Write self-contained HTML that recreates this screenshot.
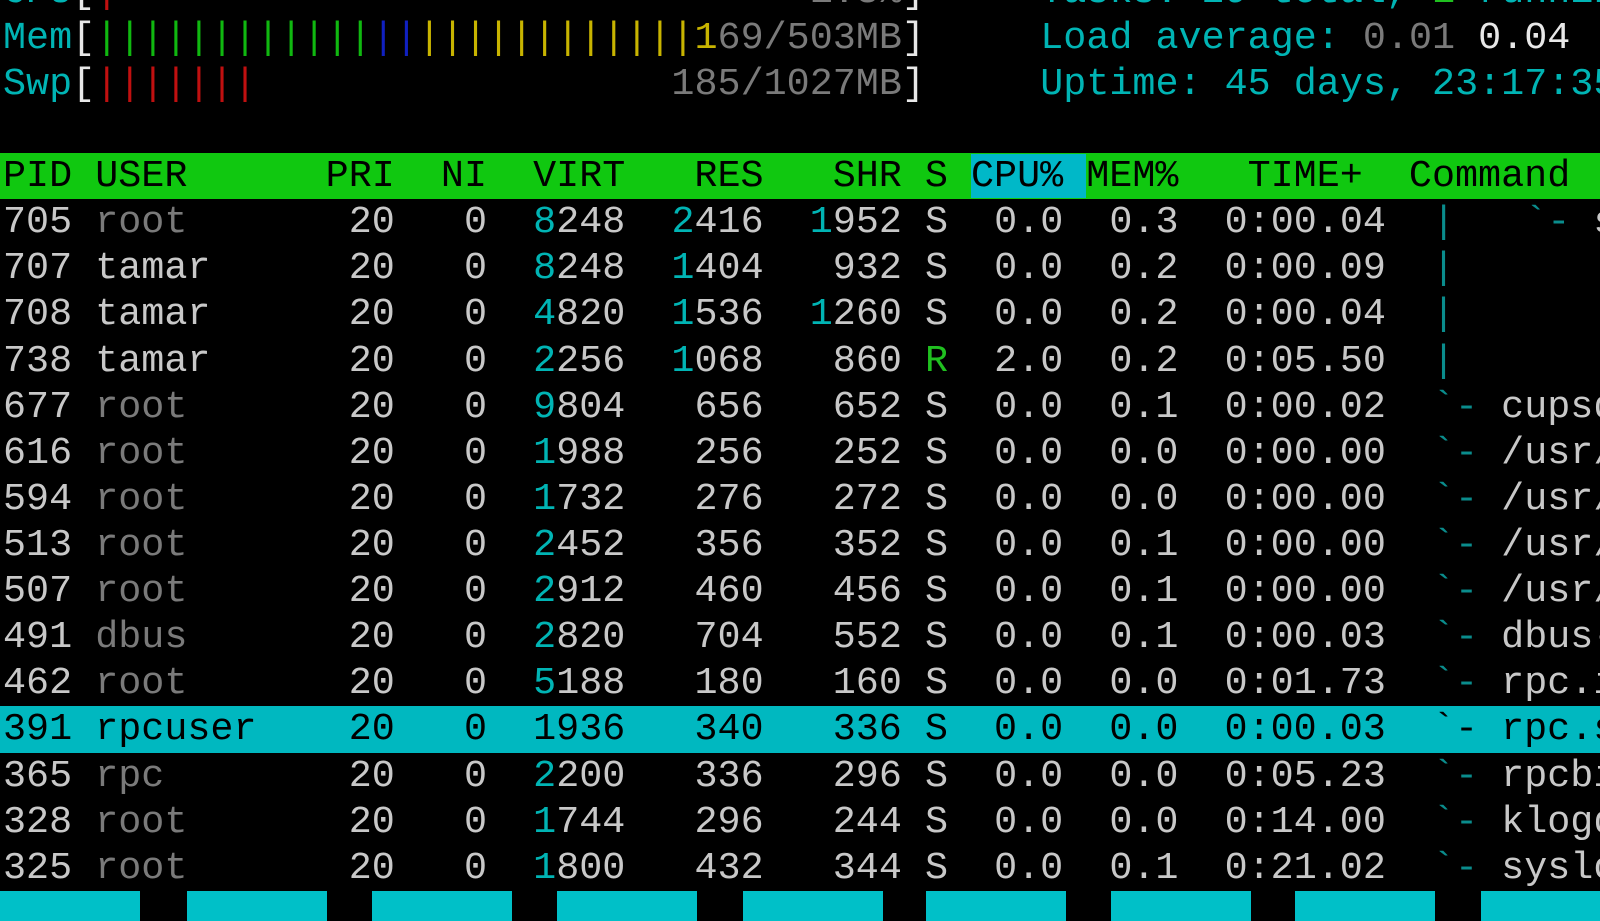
<!DOCTYPE html>
<html><head><meta charset="utf-8"><style>
html,body{margin:0;padding:0;background:#000;width:1600px;height:900px;overflow:hidden}
.l{position:absolute;left:3px;height:46.12px;line-height:46.12px;white-space:pre;font-family:"Liberation Mono",monospace;font-size:38.42px;color:#c8c8c8}
.c{color:#00b4b4}.t{color:#0a8c8c}.d{color:#7a7a7a}.w{color:#e8e8e8}.g{color:#10b810}.b{color:#1020c0}.y{color:#c8b400}.r{color:#c01010}.G{color:#20c020}
.hdr{left:0;width:1600px;padding-left:3px;background:#10c810;color:#000}
.sel{left:0;width:1600px;padding-left:3px;background:#00b8c0;color:#000}
.hc{background:#00b8c8}
.fb{position:absolute;top:891px;height:30px;background:#00c0c8;width:140px}
</style></head><body>
<div class="l" style="top:-31.4px"><span class="c">CPU</span><span class="w">[</span><span class="r">|</span>                              <span class="d">1.3%</span><span class="w">]</span>     <span class="c">Tasks: 29 total, </span><span class="G">1</span><span class="c"> running</span></div>
<div class="l" style="top:14.7px"><span class="c">Mem</span><span class="w">[</span><span class="g">||||||||||||</span><span class="b">||</span><span class="y">||||||||||||1</span><span class="d">69/503MB</span><span class="w">]</span>     <span class="c">Load average: </span><span class="d">0.01 </span><span class="w">0.04</span></div>
<div class="l" style="top:60.8px"><span class="c">Swp</span><span class="w">[</span><span class="r">|||||||</span>                  <span class="d">185/1027MB</span><span class="w">]</span>     <span class="c">Uptime: 45 days, 23:17:35</span></div>
<div class="l hdr" style="top:153px">PID USER      PRI  NI  VIRT   RES   SHR S <span class="hc">CPU% </span>MEM%   TIME+  Command</div>
<div class="l" style="top:199.1px">705 <span class="d">root</span>       20   0  <span class="c">8</span>248  <span class="c">2</span>416  <span class="c">1</span>952 S  0.0  0.3  0:00.04  <span class="t">|   `-</span> s</div>
<div class="l" style="top:245.2px">707 tamar      20   0  <span class="c">8</span>248  <span class="c">1</span>404   932 S  0.0  0.2  0:00.09  <span class="t">|</span></div>
<div class="l" style="top:291.4px">708 tamar      20   0  <span class="c">4</span>820  <span class="c">1</span>536  <span class="c">1</span>260 S  0.0  0.2  0:00.04  <span class="t">|</span></div>
<div class="l" style="top:337.5px">738 tamar      20   0  <span class="c">2</span>256  <span class="c">1</span>068   860 <span class="G">R</span>  2.0  0.2  0:05.50  <span class="t">|</span></div>
<div class="l" style="top:383.6px">677 <span class="d">root</span>       20   0  <span class="c">9</span>804   656   652 S  0.0  0.1  0:00.02  <span class="t">`-</span> cupsd</div>
<div class="l" style="top:429.7px">616 <span class="d">root</span>       20   0  <span class="c">1</span>988   256   252 S  0.0  0.0  0:00.00  <span class="t">`-</span> /usr/l</div>
<div class="l" style="top:475.8px">594 <span class="d">root</span>       20   0  <span class="c">1</span>732   276   272 S  0.0  0.0  0:00.00  <span class="t">`-</span> /usr/</div>
<div class="l" style="top:522px">513 <span class="d">root</span>       20   0  <span class="c">2</span>452   356   352 S  0.0  0.1  0:00.00  <span class="t">`-</span> /usr/</div>
<div class="l" style="top:568.1px">507 <span class="d">root</span>       20   0  <span class="c">2</span>912   460   456 S  0.0  0.1  0:00.00  <span class="t">`-</span> /usr/</div>
<div class="l" style="top:614.2px">491 <span class="d">dbus</span>       20   0  <span class="c">2</span>820   704   552 S  0.0  0.1  0:00.03  <span class="t">`-</span> dbus-</div>
<div class="l" style="top:660.3px">462 <span class="d">root</span>       20   0  <span class="c">5</span>188   180   160 S  0.0  0.0  0:01.73  <span class="t">`-</span> rpc.i</div>
<div class="l sel" style="top:706.4px">391 rpcuser    20   0  1936   340   336 S  0.0  0.0  0:00.03  `- rpc.s</div>
<div class="l" style="top:752.6px">365 <span class="d">rpc</span>        20   0  <span class="c">2</span>200   336   296 S  0.0  0.0  0:05.23  <span class="t">`-</span> rpcbi</div>
<div class="l" style="top:798.7px">328 <span class="d">root</span>       20   0  <span class="c">1</span>744   296   244 S  0.0  0.0  0:14.00  <span class="t">`-</span> klogd</div>
<div class="l" style="top:844.8px">325 <span class="d">root</span>       20   0  <span class="c">1</span>800   432   344 S  0.0  0.1  0:21.02  <span class="t">`-</span> syslo</div>
<div class="fb" style="left:0"></div>
<div class="fb" style="left:187px"></div>
<div class="fb" style="left:372px"></div>
<div class="fb" style="left:557px"></div>
<div class="fb" style="left:743px"></div>
<div class="fb" style="left:926px"></div>
<div class="fb" style="left:1111px"></div>
<div class="fb" style="left:1295px"></div>
<div class="fb" style="left:1481px;width:119px"></div>
</body></html>
